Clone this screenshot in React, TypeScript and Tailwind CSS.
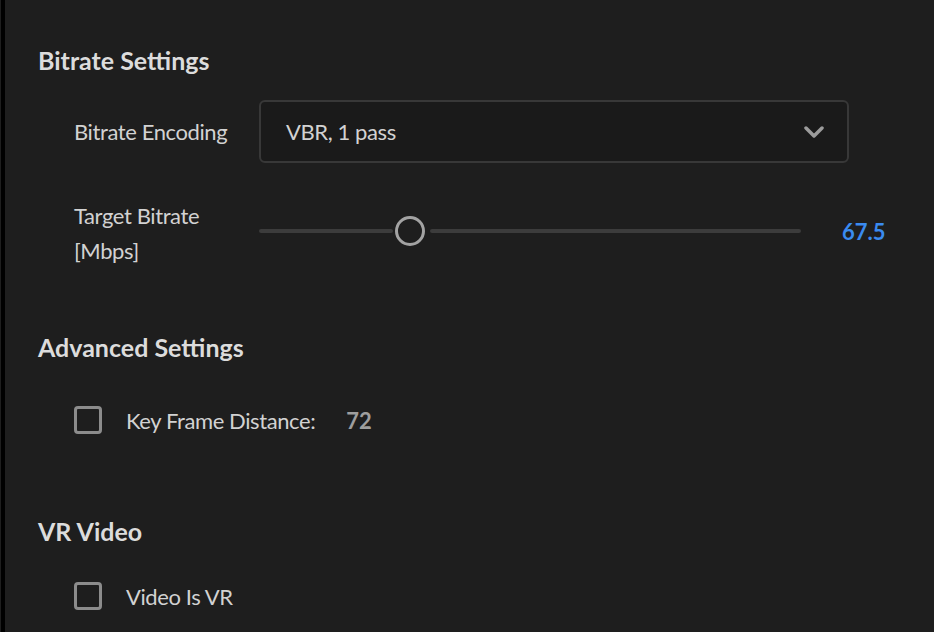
function Checkbox() {
  return <div className="w-[28px] h-[28px] flex-none rounded-[4px] border-[3px] border-[#8c8c8c]" />;
}

export default function App() {
  return (
    <div
      className="w-[934px] h-[632px] bg-[#1e1e1e] flex overflow-hidden"
      style={{ fontFamily: 'Lato, "Noto Sans", sans-serif' }}
    >
      <div className="w-px bg-[#1e1e1e]" />
      <div className="w-1 bg-black" />
      <div className="flex-1 flex flex-col pl-[33px]">
        {/* Bitrate */}
        <h2 className="mt-[44px] text-[25px] leading-[32px] font-bold text-[#dcdcdc]">Bitrate Settings</h2>

        <div className="mt-[24px] flex items-center h-[63px]">
          <div className="ml-9 w-[185px] text-[22px] tracking-[-0.4px] text-[#d2d2d2]">Bitrate Encoding</div>
          <div className="w-[590px] h-[63px] flex items-center justify-between rounded-[6px] border-2 border-[#383838] bg-[#1a1a1a] pl-[25px] pr-[23px]">
            <span className="text-[22px] tracking-[-0.4px] text-[#d2d2d2]">VBR, 1 pass</span>
            <svg width="20" height="12" viewBox="0 0 20 12" fill="none">
              <path d="M2 2 L10 10 L18 2" stroke="#9c9c9c" strokeWidth="3.5" strokeLinecap="round" strokeLinejoin="round" />
            </svg>
          </div>
        </div>

        <div className="mt-[35px] flex items-start">
          <div className="ml-9 w-[185px] text-[22px] leading-[35px] tracking-[-0.4px] text-[#d2d2d2]">
            Target Bitrate
            <br />
            [Mbps]
          </div>
          <div className="mt-[18px] flex items-center h-[30px]">
            <div className="w-[134px] h-1 rounded-full bg-[#3c3c3c]" />
            <div className="ml-[2px] w-[30px] h-[30px] rounded-full border-[3px] border-[#a3a3a3]" />
            <div className="ml-[5px] w-[371px] h-1 rounded-full bg-[#3c3c3c]" />
            <span className="ml-[41px] text-[22px] font-bold text-[#3a8bf0]">67.5</span>
          </div>
        </div>

        {/* Advanced */}
        <h2 className="mt-[63px] text-[25px] leading-[32px] font-bold text-[#dcdcdc]">Advanced Settings</h2>

        <div className="mt-[43px] ml-9 flex items-center h-[28px]">
          <Checkbox />
          <span className="ml-6 text-[22px] tracking-[-0.4px] text-[#d2d2d2]">Key Frame Distance:</span>
          <span className="ml-[31px] text-[22px] font-bold text-[#9e9e9e]">72</span>
        </div>

        {/* VR */}
        <h2 className="mt-[81px] text-[25px] leading-[32px] font-bold text-[#dcdcdc]">VR Video</h2>

        <div className="mt-[35px] ml-9 flex items-center h-[28px]">
          <Checkbox />
          <span className="ml-6 text-[22px] tracking-[-0.4px] text-[#d2d2d2]">Video Is VR</span>
        </div>
      </div>
    </div>
  );
}
